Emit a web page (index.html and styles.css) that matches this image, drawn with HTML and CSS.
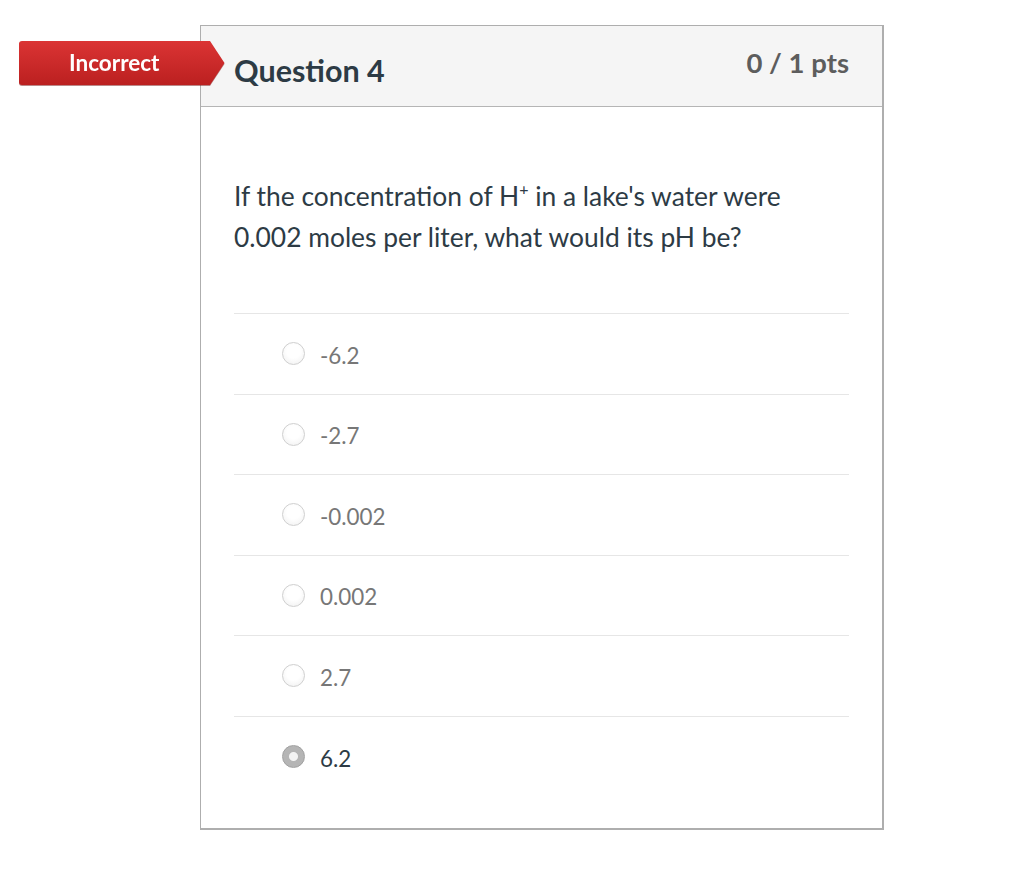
FILE: index.html
```html
<!DOCTYPE html>
<html>
<head>
<meta charset="utf-8">
<link rel="stylesheet" href="styles.css">
</head>
<body>
<div class="page">
  <div class="card">
    <div class="badge">
      <span class="badge-body">Incorrect</span>
      <svg class="badge-tip" width="17" height="44" viewBox="0 0 17 44"><defs><linearGradient id="g" x1="0" y1="0" x2="0" y2="1"><stop offset="0" stop-color="#db3434"/><stop offset="1" stop-color="#bb2020"/></linearGradient></defs><path d="M0 0 L2 0 L16.5 22 L2 44 L0 44 Z" fill="url(#g)"/></svg>
    </div>
    <div class="card-header">
      <h2 class="q-title">Question 4</h2>
      <span class="q-pts">0 / 1 pts</span>
    </div>
    <div class="card-body">
      <p class="q-text">If the concentration of H<sup>+</sup> in a lake's water were 0.002 moles per liter, what would its pH be?</p>
      <ul class="answers">
        <li class="answer"><span class="radio"></span><span class="a-text">-6.2</span></li>
        <li class="answer"><span class="radio"></span><span class="a-text">-2.7</span></li>
        <li class="answer"><span class="radio"></span><span class="a-text">-0.002</span></li>
        <li class="answer"><span class="radio"></span><span class="a-text">0.002</span></li>
        <li class="answer"><span class="radio"></span><span class="a-text">2.7</span></li>
        <li class="answer selected"><span class="radio"></span><span class="a-text">6.2</span></li>
      </ul>
    </div>
  </div>
</div>
</body>
</html>
```
FILE: styles.css
```css
html, body {
  margin: 0;
  padding: 0;
  background: #ffffff;
  font-family: Lato, "Open Sans", "Liberation Sans", sans-serif;
  color: #2d3b45;
}
.page {
  padding: 25px 0 0 200px;
}
.card {
  position: relative;
  width: 684px;
  border: 1px solid #aeaeae;
  border-width: 1px 2px 2px 1px;
  box-sizing: border-box;
  height: 805px;
}
.badge {
  position: absolute;
  left: -182px;
  top: 15px;
  display: flex;
  align-items: stretch;
  height: 44px;
  filter: drop-shadow(0 1px 0 rgba(120,20,20,0.5));
}
.badge-body {
  width: 190px;
  height: 44px;
  box-sizing: border-box;
  background: linear-gradient(#db3434, #bb2020);
  border-radius: 3px 0 0 3px;
  color: #ffffff;
  font-weight: 700;
  font-size: 22.5px;
  line-height: 44px;
  padding-left: 50px;
  letter-spacing: 0;
}
.badge-tip {
  display: block;
  margin-left: -1px;
}
.card-header {
  display: flex;
  justify-content: space-between;
  align-items: flex-start;
  background: #f5f5f5;
  border-bottom: 1px solid #b5b5b5;
  height: 81px;
  box-sizing: border-box;
  padding: 0 33px 0 33px;
}
.q-title {
  margin: 0;
  font-size: 30.5px;
  font-weight: 700;
  line-height: 34px;
  padding-top: 27px;
  color: #2d3b45;
}
.q-pts {
  font-size: 27.5px;
  font-weight: 700;
  color: #5d5d5d;
  line-height: 34px;
  padding-top: 20px;
}
.card-body {
  padding: 0 33px 0 33px;
}
.q-text {
  margin: 0;
  padding-top: 69px;
  width: 575px;
  font-size: 26.4px;
  line-height: 41px;
  color: #2d3b45;
  height: 137px;
}
.q-text sup {
  font-size: 16px;
  line-height: 1;
  vertical-align: 11px;
}
.answers {
  list-style: none;
  margin: 0;
  padding: 0;
  border-top: 1px solid #e6e6e6;
}
.answer {
  display: flex;
  align-items: center;
  height: 80.5px;
  border-bottom: 1px solid #e6e6e6;
  padding-left: 48px;
  box-sizing: border-box;
}
.answer:last-child {
  border-bottom: none;
}
.radio {
  width: 21px;
  height: 21px;
  border-radius: 50%;
  border: 1px solid #d0d0d0;
  background: radial-gradient(circle at 50% 40%, #ffffff 40%, #eeeeee 100%);
  margin-right: 15px;
  flex: none;
}
.a-text {
  font-size: 22.4px;
  color: #777777;
  padding-top: 3px;
}
.selected .radio {
  border: 1px solid #a0a0a0;
  background: radial-gradient(circle, #f4f4f4 0 4px, #b5b5b5 5px 100%);
}
.selected .a-text {
  color: #2d3b45;
}
```
